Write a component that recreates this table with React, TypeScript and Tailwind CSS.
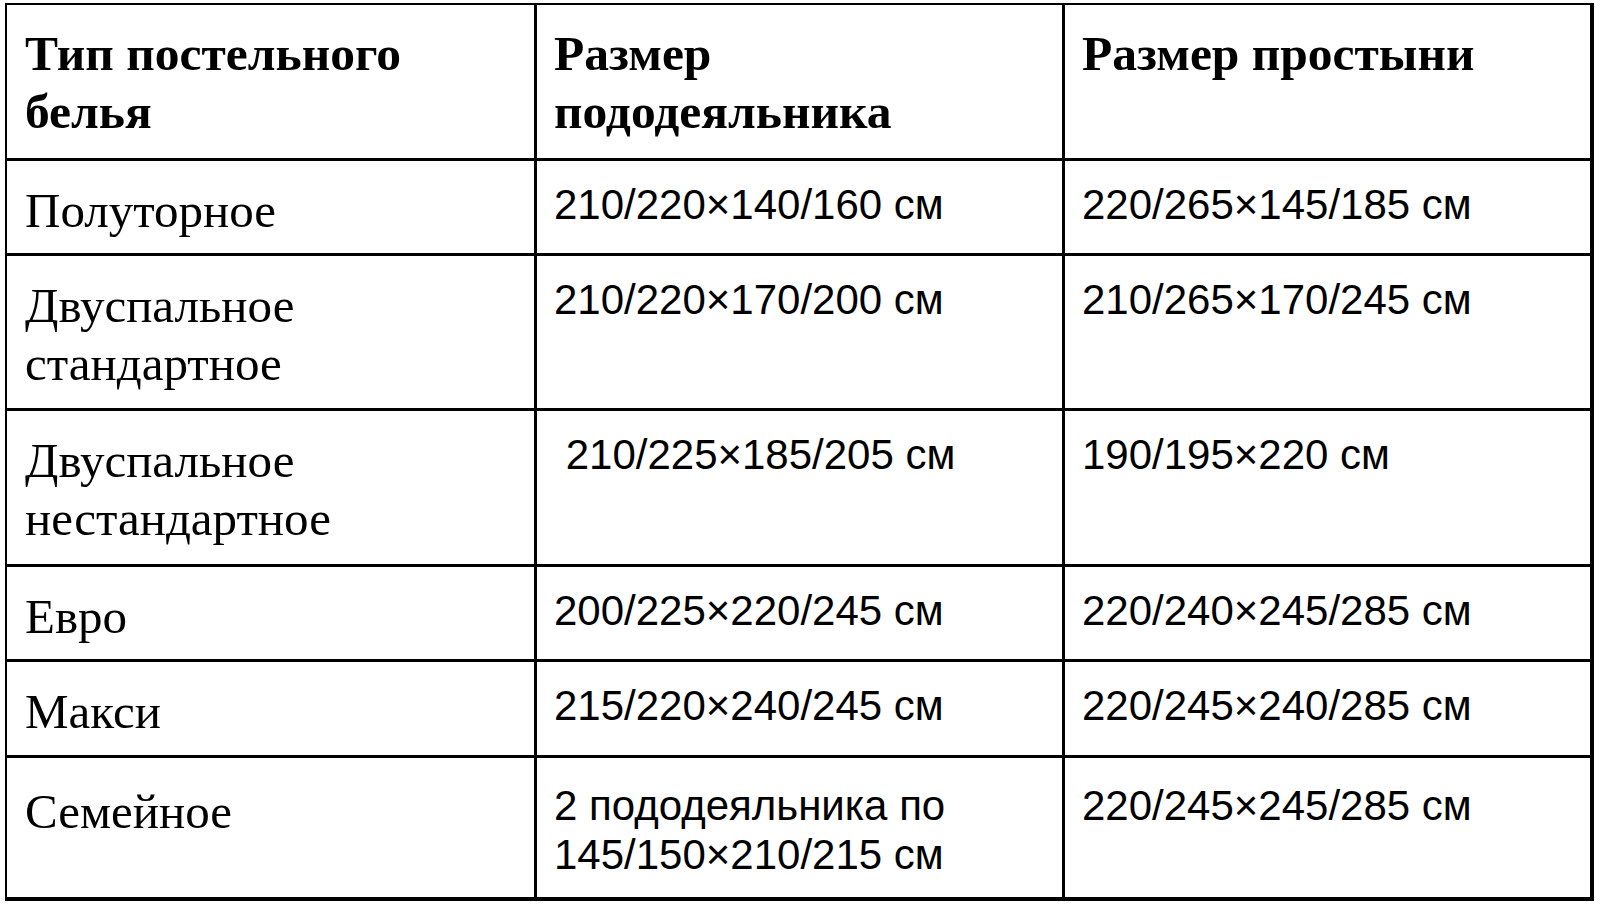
import React from "react";

const serif = "font-['Liberation_Serif','Times_New_Roman',serif]";
const sans = "font-['Liberation_Sans',Arial,sans-serif]";

function Head({ children, pl }: { children: React.ReactNode; pl: string }) {
  return (
    <div className={`bg-white ${pl} pt-[20px] ${serif} font-bold text-[49.5px] leading-[57.6px] text-black`}>
      {children}
    </div>
  );
}

function NameCell({ children, pt }: { children: React.ReactNode; pt: string }) {
  return (
    <div className={`bg-white pl-[18px] ${pt} ${serif} text-[49px] leading-[58px] text-black`}>
      {children}
    </div>
  );
}

function SizeCell({ children, pt }: { children: React.ReactNode; pt: string }) {
  return (
    <div className={`bg-white pl-[17px] ${pt} ${sans} text-[42px] leading-[49px] text-black whitespace-pre`}>
      {children}
    </div>
  );
}

export default function App() {
  const rows: { name: React.ReactNode; a: React.ReactNode; b: React.ReactNode; last?: boolean }[] = [
    { name: "Полуторное", a: "210/220×140/160 см", b: "220/265×145/185 см" },
    {
      name: (
        <>
          Двуспальное
          <br />
          стандартное
        </>
      ),
      a: "210/220×170/200 см",
      b: "210/265×170/245 см",
    },
    {
      name: (
        <>
          Двуспальное
          <br />
          нестандартное
        </>
      ),
      a: " 210/225×185/205 см",
      b: "190/195×220 см",
    },
    { name: "Евро", a: "200/225×220/245 см", b: "220/240×245/285 см" },
    { name: "Макси", a: "215/220×240/245 см", b: "220/245×240/285 см" },
    {
      name: "Семейное",
      a: (
        <>
          2 пододеяльника по
          <br />
          145/150×210/215 см
        </>
      ),
      b: "220/245×245/285 см",
      last: true,
    },
  ];

  return (
    <div className="w-[1600px] h-[906px] bg-white overflow-hidden">
      <div className="ml-[5px] mt-[3px] inline-grid grid-cols-[527px_525px_525px] grid-rows-[153px_92px_152px_153px_92px_93px_139px] gap-[3px] bg-black pt-[2px] pl-[2px] pr-[4px] pb-[4px]">
        <Head pl="pl-[18px]">
          Тип постельного
          <br />
          белья
        </Head>
        <Head pl="pl-[17px]">
          Размер
          <br />
          пододеяльника
        </Head>
        <Head pl="pl-[17px]">Размер простыни</Head>
        {rows.map((r, i) => (
          <React.Fragment key={i}>
            <NameCell pt={r.last ? "pt-[25px]" : "pt-[21px]"}>{r.name}</NameCell>
            <SizeCell pt={r.last ? "pt-[23px]" : "pt-[19px]"}>{r.a}</SizeCell>
            <SizeCell pt={r.last ? "pt-[23px]" : "pt-[19px]"}>{r.b}</SizeCell>
          </React.Fragment>
        ))}
      </div>
    </div>
  );
}
